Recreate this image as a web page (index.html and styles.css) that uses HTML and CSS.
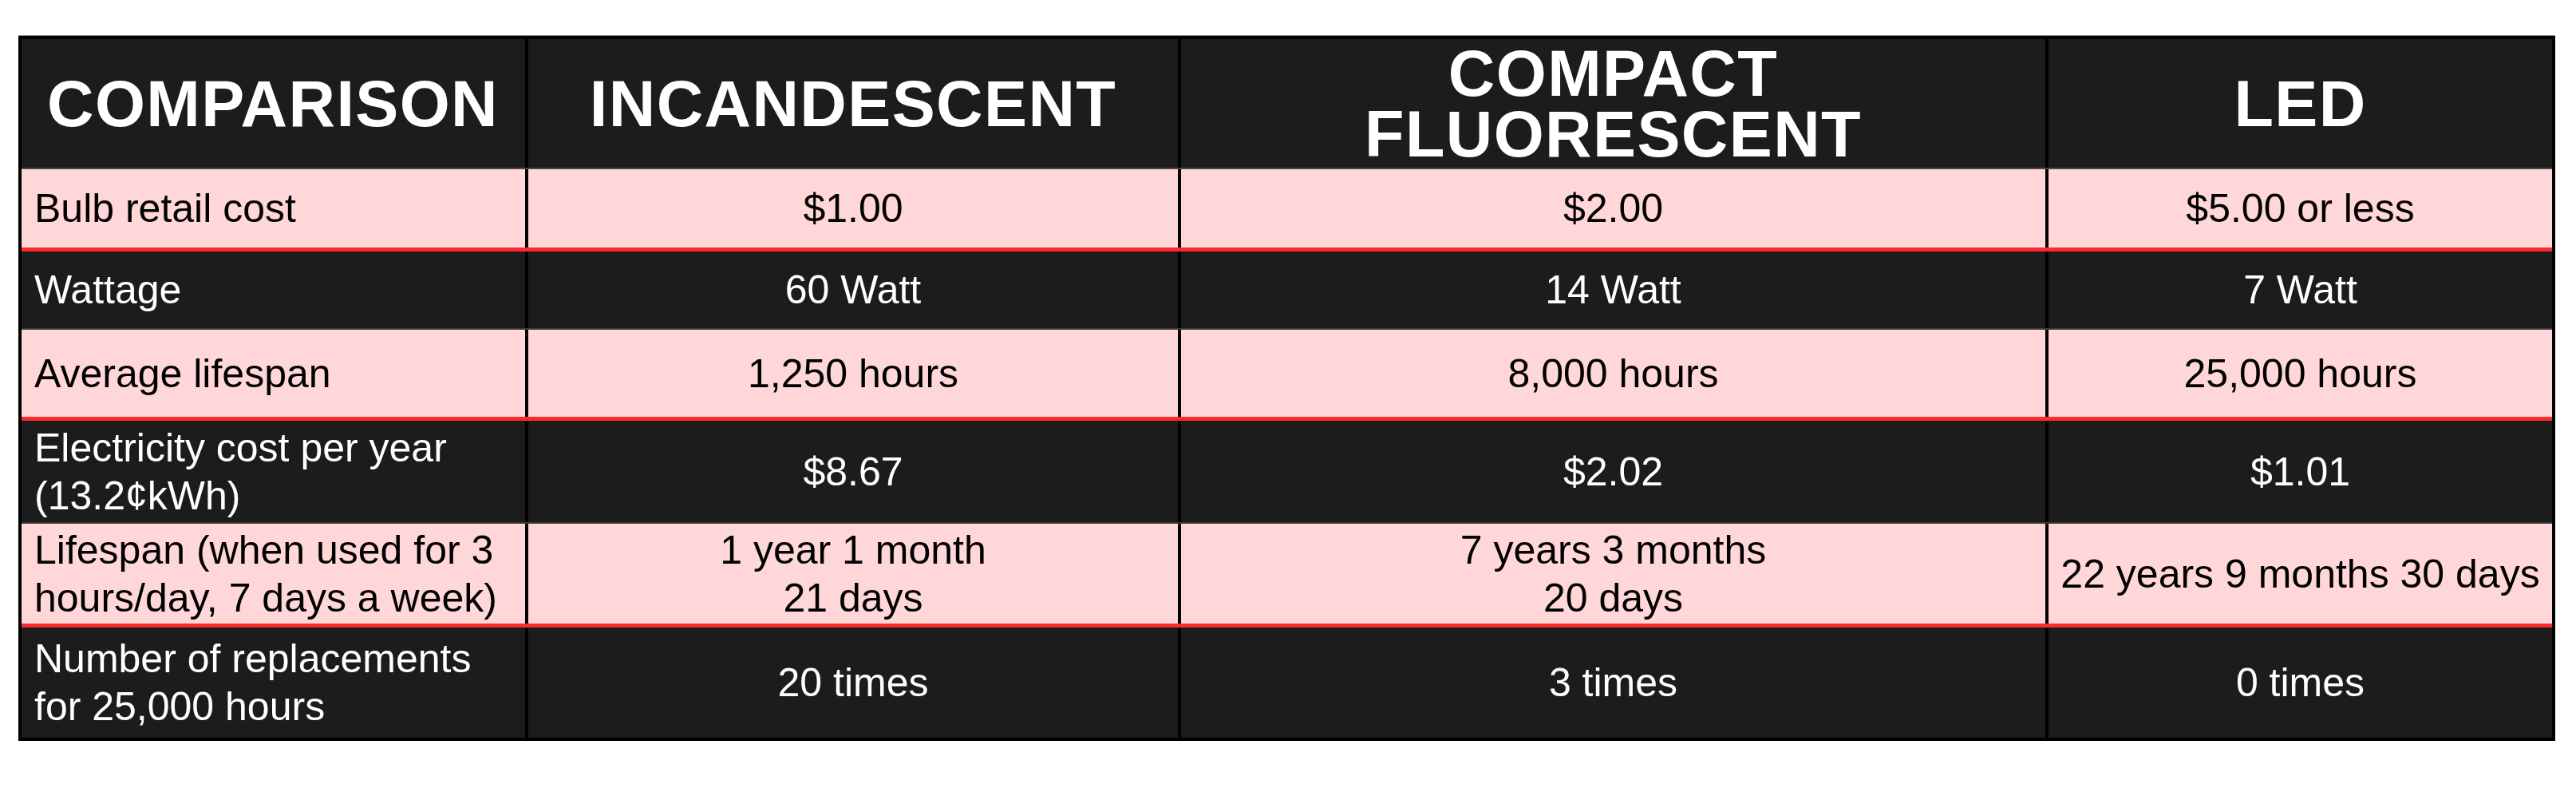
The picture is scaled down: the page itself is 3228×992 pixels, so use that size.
FILE: index.html
```html
<!DOCTYPE html>
<html lang="en">
<head>
<meta charset="utf-8">
<title>Bulb comparison</title>
<link rel="stylesheet" href="styles.css">
</head>
<body>
<main class="page">
  <div class="table">
    <div class="row head">
      <div class="cell label">COMPARISON</div>
      <div class="cell">INCANDESCENT</div>
      <div class="cell">COMPACT<br>FLUORESCENT</div>
      <div class="cell">LED</div>
    </div>
    <div class="row pink">
      <div class="cell label">Bulb retail cost</div>
      <div class="cell">$1.00</div>
      <div class="cell">$2.00</div>
      <div class="cell">$5.00 or less</div>
    </div>
    <div class="row dark">
      <div class="cell label">Wattage</div>
      <div class="cell">60 Watt</div>
      <div class="cell">14 Watt</div>
      <div class="cell">7 Watt</div>
    </div>
    <div class="row pink">
      <div class="cell label">Average lifespan</div>
      <div class="cell">1,250 hours</div>
      <div class="cell">8,000 hours</div>
      <div class="cell">25,000 hours</div>
    </div>
    <div class="row dark">
      <div class="cell label">Electricity cost per year<br>(13.2¢kWh)</div>
      <div class="cell">$8.67</div>
      <div class="cell">$2.02</div>
      <div class="cell">$1.01</div>
    </div>
    <div class="row pink">
      <div class="cell label">Lifespan (when used for 3<br>hours/day, 7 days a week)</div>
      <div class="cell">1 year 1 month<br>21 days</div>
      <div class="cell">7 years 3 months<br>20 days</div>
      <div class="cell">22 years 9 months 30 days</div>
    </div>
    <div class="row dark last">
      <div class="cell label">Number of replacements<br>for 25,000 hours</div>
      <div class="cell">20 times</div>
      <div class="cell">3 times</div>
      <div class="cell">0 times</div>
    </div>
  </div>
</main>
</body>
</html>
```

FILE: styles.css
```css
* { box-sizing: border-box; }

html, body {
  margin: 0;
  padding: 0;
  background: #ffffff;
}

body {
  font-family: "Liberation Sans", Arial, Helvetica, sans-serif;
}

.page {
  padding: 45px 0 0 23px;
}

.table {
  width: 3179px;
  height: 883px;
  border: 4px solid #000000;
  box-shadow: 0 -1px 0 #8a8a8a, 0 1px 0 #8a8a8a;
  display: grid;
  grid-template-rows: 163px 103px 98px 114px 129px 130px 138px;
  background: #1c1c1c;
}

.row {
  display: grid;
  grid-template-columns: 631px 818px 1087px 635px;
}

.cell {
  display: flex;
  align-items: center;
  justify-content: center;
  text-align: center;
  white-space: nowrap;
  font-size: 50px;
  line-height: 60px;
  border-left: 4px solid #000000;
}

.cell.label {
  border-left: none;
  justify-content: flex-start;
  text-align: left;
  padding-left: 16px;
}

.head {
  background: #1c1c1c;
  color: #ffffff;
  border-bottom: 2px solid #4a4a4a;
}

.head .cell {
  font-weight: 700;
  font-size: 81px;
  line-height: 76px;
  letter-spacing: 1.4px;
}

.head .cell.label {
  padding-left: 32px;
}

.pink {
  background: #ffd7d8;
  color: #000000;
  border-bottom: 5px solid #fd2a2d;
}

.dark {
  background: #1c1c1c;
  color: #ffffff;
  border-bottom: 2px solid #3a3a3a;
}

.dark.last {
  border-bottom: none;
}
```
